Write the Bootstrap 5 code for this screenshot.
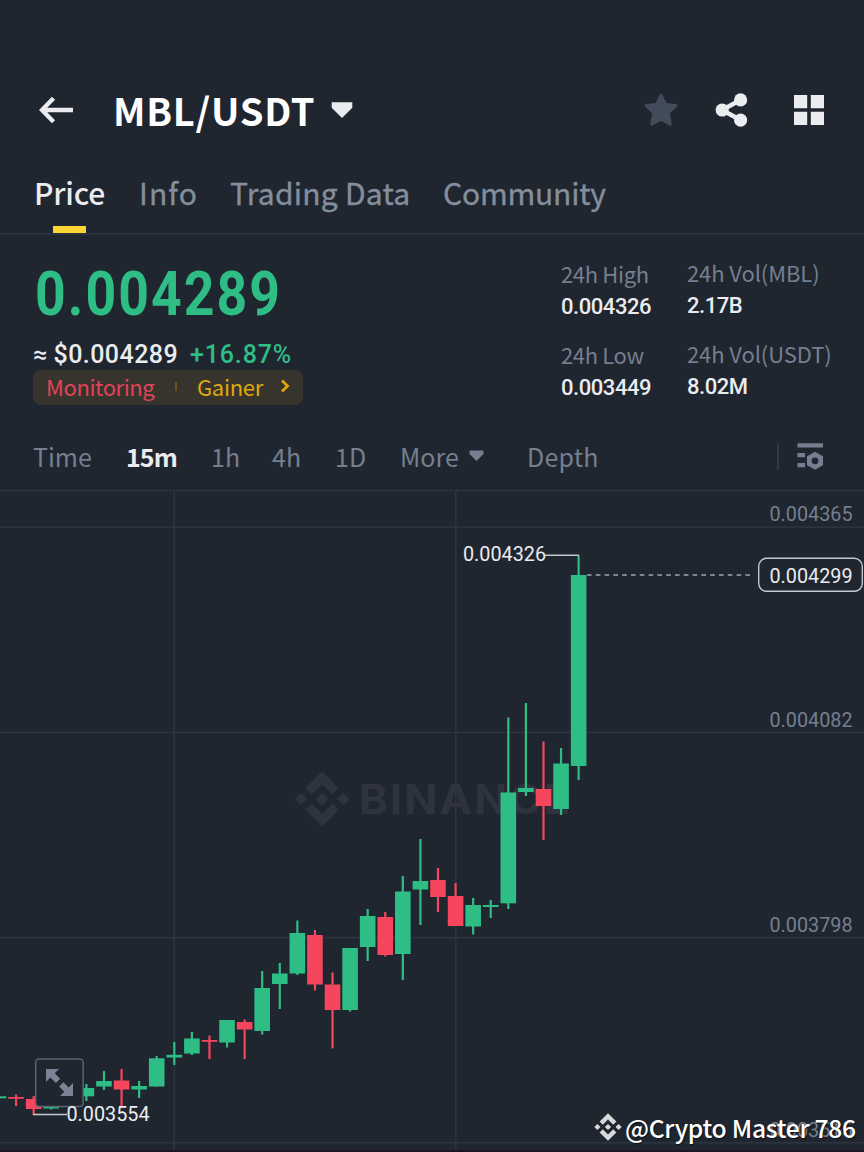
<!DOCTYPE html>
<html lang="en">
<head>
<meta charset="utf-8">
<meta name="viewport" content="width=device-width, initial-scale=1">
<title>MBL/USDT</title>
<link href="https://cdn.jsdelivr.net/npm/bootstrap@5.3.0/dist/css/bootstrap.min.css" rel="stylesheet">
<style>
  :root { --ink:#eaecef; --muted:#848e9c; --dim:#757f8f; --line:#2b323d; --up:#2ebd85; --down:#f6465d; }
  body { background:#202630; color:var(--ink); font-family:"Noto Sans CJK SC","Open Sans",sans-serif; line-height:1; width:864px; height:1152px; overflow:hidden; }
  .num { font-family:Roboto,sans-serif; }
  .topbar { height:96px; margin-top:62px; padding:0 40px 0 39px; }
  .pair { font-size:38px; font-weight:700; letter-spacing:.75px; color:#fff; width:218px; margin-left:40px; line-height:38px; white-space:nowrap; }
  .tabs { height:77px; padding:19px 0 0 34px; border-bottom:2px solid var(--line); font-size:30px; color:var(--muted); }
  .tabs .nav-link { padding:0; color:inherit; letter-spacing:.25px; height:56px; -webkit-text-stroke:.35px currentColor; }
  .tabs .active { color:var(--ink); font-weight:500; position:relative; letter-spacing:-.2px; -webkit-text-stroke:0; }
  .tabs .active::after { content:""; position:absolute; left:19px; bottom:0; width:33px; height:7px; background:#fcd535; }
  .summary { height:190px; padding-left:34px; }
  .price-box { width:527px; padding-top:28px; }
  .last { font-size:61.5px; font-weight:700; color:var(--up); letter-spacing:2.4px; line-height:62px; transform:scaleX(.87); transform-origin:0 0; width:290px; margin-left:.5px; }
  .fiat { font-size:25px; font-weight:500; line-height:25px; margin-top:17px; }
  .tags { width:270px; height:35px; margin:2.5px 0 0 -1px; padding-bottom:2px; border-radius:8px; background:#37342e; font-size:22px; }
  .tags .sep { width:2px; height:9px; background:#68531e; }
  .stat { font-size:22px; color:var(--dim); letter-spacing:-.35px; line-height:22px; }
  .stat .num { font-size:22px; font-weight:500; color:var(--ink); line-height:22px; margin-top:12px; margin-bottom:24.5px; letter-spacing:-.45px; }
  .intervals { height:65px; padding:19px 40px 0 33px; font-size:25px; color:var(--dim); line-height:25px; }
  .chart-area { height:662px; }
  .chart-area svg { display:block; }
  .axis { font:19.8px Roboto,sans-serif; fill:var(--dim); }
  .axis-lit { font:19.8px Roboto,sans-serif; fill:var(--ink); }
  .up { fill:var(--up); stroke:var(--up); }
  .down { fill:var(--down); stroke:var(--down); }
  .credit { position:absolute; left:594px; top:1113px; font-size:24.7px; font-weight:500; color:#fff; text-shadow:1px 1px 1px rgba(0,0,0,.6); line-height:28px; white-space:nowrap; }
  .credit span { letter-spacing:-.3px; margin-top:-1px; }
</style>
</head>
<body>
<header class="topbar d-flex align-items-center">
  <svg width="34" height="28" viewBox="0 0 34 28" fill="none" stroke="#eaecef" stroke-width="4.4"><path d="M34 14H3.5M14.5 2.200 3 14l11.500 11.800"/></svg>
  <div class="pair">MBL/USDT</div>
  <svg width="22" height="17" viewBox="0 0 22 17"><path d="M.7.300h20.600v5.500L11 16 .7 5.800z" fill="#eaecef"/></svg>
  <div class="d-flex align-items-center ms-auto">
    <svg width="34" height="34" viewBox="0 0 34 34"><path d="M17 2.200 21.300 11.500 31.800 12.600 24.100 19.900 26.300 31.300 17 26.300 7.700 31.300 9.900 19.900 2.200 12.600 12.700 11.500z" fill="#434c5a" stroke="#434c5a" stroke-width="3" stroke-linejoin="round"/></svg>
    <svg style="margin-left:37px" width="33" height="34" viewBox="0 0 33 34" fill="#eaecef"><path d="M25.500 7 7 17l18.500 10" fill="none" stroke="#eaecef" stroke-width="4.500"/><circle cx="7.200" cy="17" r="6.600"/><circle cx="25.600" cy="6.900" r="6.600"/><circle cx="25.600" cy="27.100" r="6.600"/></svg>
    <svg style="margin-left:46px" width="30" height="30" viewBox="0 0 30 30" fill="#eaecef"><path d="M0 0h13.200v13.200H0zM16.800 0H30v13.200H16.800zM0 16.800h13.200V30H0zM16.800 16.800H30V30H16.800z"/></svg>
  </div>
</header>

<nav class="tabs nav flex-nowrap">
  <a class="nav-link active" style="width:105px">Price</a>
  <a class="nav-link" style="width:91px;letter-spacing:1.1px">Info</a>
  <a class="nav-link" style="width:213px">Trading Data</a>
  <a class="nav-link" style="letter-spacing:-.2px">Community</a>
</nav>

<section class="summary d-flex">
  <div class="price-box">
    <div class="last num">0.004289</div>
    <div class="fiat num d-flex"><span style="width:20.500px;margin-left:-1px">≈</span><span style="width:136.500px;letter-spacing:.45px">$0.004289</span><span style="color:var(--up);letter-spacing:.85px">+16.87%</span></div>
    <div class="tags d-flex align-items-center">
      <span style="color:#e0435a;margin-left:13px;width:129px;letter-spacing:-.4px">Monitoring</span>
      <span class="sep"></span>
      <span style="color:#e0a80a;margin-left:20px;width:84px;letter-spacing:-.3px">Gainer</span>
      <svg width="9" height="14" viewBox="0 0 9 14" fill="none" stroke="#e0a80a" stroke-width="2.800"><path d="M1 1.500 6.500 7 1 12.500"/></svg>
    </div>
  </div>
  <div class="stat" style="width:126px;padding-top:27px">
    <div>24h High</div><div class="num">0.004326</div>
    <div>24h Low</div><div class="num">0.003449</div>
  </div>
  <div class="stat text-nowrap" style="padding-top:26px;letter-spacing:-.1px">
    <div>24h Vol(MBL)</div><div class="num">2.17B</div>
    <div>24h Vol(USDT)</div><div class="num">8.02M</div>
  </div>
</section>

<section class="intervals d-flex">
  <span style="width:93px">Time</span>
  <span style="width:85px;color:var(--ink);font-weight:700;letter-spacing:-.9px">15m</span>
  <span style="width:61px">1h</span>
  <span style="width:63px">4h</span>
  <span style="width:65px">1D</span>
  <span style="width:69px">More</span>
  <svg style="margin-top:6px" width="15" height="12" viewBox="0 0 15 12"><path d="M.5.500h14v3.500l-7 7-7-7z" fill="#757f8f"/></svg>
  <span style="margin-left:43px;letter-spacing:.2px">Depth</span>
  <svg class="ms-auto" style="margin-top:-1px" width="48" height="28" viewBox="0 0 48 28"><path d="M2 0v27" stroke="#343c48" stroke-width="1.800"/><g fill="#757f8f"><path d="M21.500.200H47v4.300H21.500zM21.500 10h7.500v4.300h-7.500zM21.500 20h7.500v4.300h-7.500z"/><path fill-rule="evenodd" d="M39 8.800 47 13.200v9.100L39 26.700l-8-4.400v-9.100zM39 14.400a3.400 3.400 0 1 0 0 6.800 3.400 3.400 0 0 0 0-6.800z"/></g></svg>
</section>

<main class="chart-area">
<svg width="864" height="662" viewBox="0 490 864 662">
  <g stroke="#2d343f" stroke-width="1.600"><path d="M0 490.500h864M0 527.300h864M0 732.500h864M0 937.600h864M0 1142.800h864M174.300 490v662M455.800 490v662"/></g>
  <path d="M0 1151h864" stroke="#191824" stroke-width="2"/>
  <g fill="#2e333d">
    <path transform="translate(322 799)" d="M0-27.500 16.700-10.800 10.500-4.600 0-15-10.500-4.600-16.700-10.800zM0 27.500 16.700 10.800 10.500 4.600 0 15-10.500 4.600-16.700 10.800zM0-6.200 6.200 0 0 6.200-6.200 0zM-21.200-6.200-15 0-21.200 6.200-27.400 0zM21.200-6.200 27.400 0 21.200 6.200 15 0z"/>
    <text x="359" y="814" font-family="Inter,sans-serif" font-weight="700" font-size="41" letter-spacing="2" textLength="213" lengthAdjust="spacingAndGlyphs">BINANCE</text>
  </g>
  <g id="candles"></g>
  <path d="M545 555.300h34M33 1114.500h34" stroke="#c4c7cc" stroke-width="1.400"/>
  <path d="M587 575h163" stroke="#a0a5ad" stroke-width="1.600" stroke-dasharray="4.600 4.200"/>
  <rect x="758.700" y="558.300" width="103.600" height="33" rx="8" fill="#202630" stroke="#c4c7cc" stroke-width="1.400"/>
  <g class="axis"><text x="769.500" y="521">0.004365</text><text x="769.500" y="726.500">0.004082</text><text x="769.500" y="931.500">0.003798</text><text x="769.500" y="1137">0.003515</text></g>
  <g class="axis-lit"><text x="769.500" y="582.500">0.004299</text><text x="463" y="561">0.004326</text></g>
  <rect x="35.700" y="1059" width="47.400" height="47.400" rx="3.500" fill="#202630" stroke="#5a6372" stroke-width="1.500"/>
  <path d="M46 1069h13l-4.300 4.300 5.500 5.500-4.300 4.300-5.500-5.500L46 1082zM73 1096H60l4.300-4.300-5.200-5.200 4.300-4.300 5.200 5.200L73 1083z" fill="#7a8496"/>
  <text class="axis-lit" x="66.500" y="1120.800">0.003554</text>
</svg>
</main>

<div class="credit d-flex align-items-center">
  <svg width="31" height="28" viewBox="-28 -28 62 56" fill="#d8d9db"><path d="M0-27.500 16.700-10.800 10.500-4.600 0-15-10.500-4.600-16.700-10.800zM0 27.500 16.700 10.800 10.500 4.600 0 15-10.500 4.600-16.700 10.800zM0-6.200 6.200 0 0 6.200-6.200 0zM-21.200-6.200-15 0-21.200 6.200-27.400 0zM21.200-6.200 27.400 0 21.200 6.200 15 0z"/></svg>
  <span>@Crypto Master 786</span>
</div>

<script src="https://cdn.jsdelivr.net/npm/bootstrap@5.3.0/dist/js/bootstrap.bundle.min.js"></script>
<script>
  // slot, rising, body top, body bottom, wick top, wick bottom
  const candles = [
    [-10,1,1096.3,1098.3,1096.3,1098.3],[-9,0,1097,1098.8,1094.5,1106],[-8,0,1099,1109,1096,1115],[-7,1,1106.500,1108.500,1106,1109.500],
    [-6,1,1105,1107,1104,1109.500],[-5,1,1088,1096.300,1084,1101],[-4,1,1081,1086.500,1071,1090],[-3,0,1080.500,1089.500,1069,1107],
    [-2,1,1086,1089.500,1081,1098],[-1,1,1058.300,1086.500,1056,1086.500],[0,1,1054.800,1057.500,1042,1065],[1,1,1038.500,1053.500,1032,1055],
    [2,0,1040,1041.800,1035.500,1059],[3,1,1020,1042.500,1020,1047.500],[4,0,1022,1029.500,1019.500,1059],[5,1,988,1031,971,1034.500],
    [6,1,973.500,984,963,1009],[7,1,933,973.500,920.500,975],[8,0,935,984.500,930,990.500],[9,0,984.500,1010,972.500,1048.500],
    [10,1,948,1010,948,1011.500],[11,1,916,947,909,961],[12,0,917,955,912,956.500],[13,1,891.500,954,876,980],
    [14,1,881,889.500,839,925],[15,0,880,897,868,912],[16,0,896,926,883,926],[17,1,905,926.500,898,934.500],
    [18,1,905,907,900,918],[19,1,792.500,903.300,717.500,909],[20,1,788,792,703,796],[21,0,789,806,741.500,840],
    [22,1,763.500,809,748,815],[23,1,575,766,555.500,780]];
  document.getElementById('candles').innerHTML = candles.map(([k, up, t, b, wt, wb]) => {
    const x = 174.300 + k * 17.58;
    return `<g class="${up ? 'up' : 'down'}"><rect x="${x - 7.8}" y="${t}" width="15.6" height="${b - t}" stroke="none"/><path d="M${x} ${wt}V${wb}" stroke-width="2.2"/></g>`;
  }).join('');
</script>
</body>
</html>
